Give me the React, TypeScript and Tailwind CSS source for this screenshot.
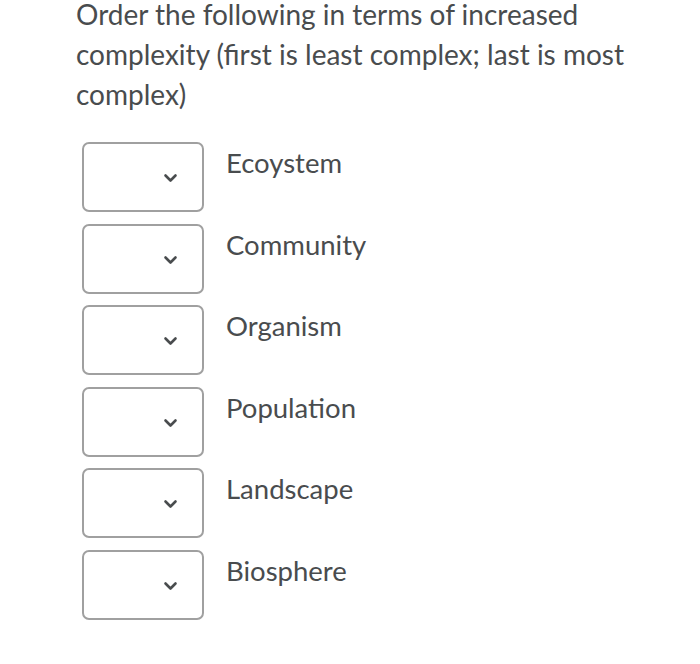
import React from 'react';

const items = ['Ecoystem', 'Community', 'Organism', 'Population', 'Landscape', 'Biosphere'];

const Chevron = () => (
  <svg width="15" height="10" viewBox="0 0 15 10" fill="none">
    <path d="M2.5 2.5l5 5 5-5" stroke="#494c4e" strokeWidth="2.6" strokeLinecap="round" strokeLinejoin="round" />
  </svg>
);

export default function App() {
  return (
    <div className="min-h-screen bg-white text-[#494c4e]" style={{ fontFamily: 'Lato, "Noto Sans", sans-serif' }}>
      <div className="pl-[76px] pr-6 pt-px">
        <p className="text-[28px] leading-[40px] -mt-[7px]">
          Order the following in terms of increased complexity (first is least complex; last is most complex)
        </p>
        <div className="mt-[28px] pl-[6px] flex flex-col gap-[11.5px]">
          {items.map((label) => (
            <div key={label} className="flex items-start">
              <div className="w-[122px] h-[70px] rounded-[7px] border-2 border-[#a0a0a0] flex items-center justify-end pr-[24px] pt-[2px]">
                <Chevron />
              </div>
              <span className="ml-[22px] mt-[5px] text-[27.5px] leading-[32px]">{label}</span>
            </div>
          ))}
        </div>
      </div>
    </div>
  );
}
